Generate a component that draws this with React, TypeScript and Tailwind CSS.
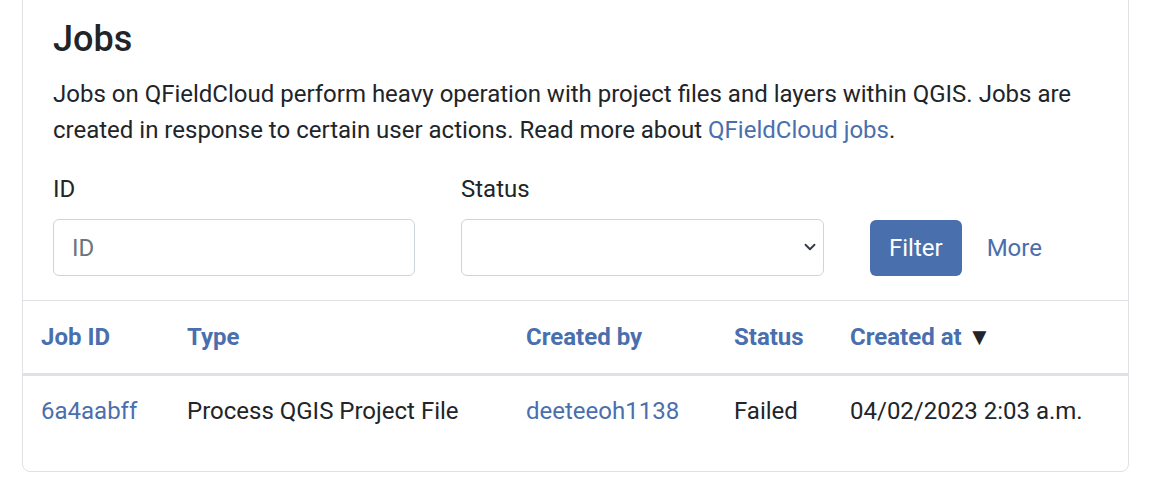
import { ChevronDown } from 'lucide-react';

interface Job {
    id: string;
    type: string;
    createdBy: string;
    status: string;
    createdAt: string;
}

const jobs: Job[] = [
    {
        id: '6a4aabff',
        type: 'Process QGIS Project File',
        createdBy: 'deeteeoh1138',
        status: 'Failed',
        createdAt: '04/02/2023 2:03 a.m.',
    },
];

const columns = [
    { label: 'Job ID', width: 'w-[146px]' },
    { label: 'Type', width: 'w-[339px]' },
    { label: 'Created by', width: 'w-[208px]' },
    { label: 'Status', width: 'w-[116px]' },
    { label: 'Created at', width: '', sorted: true },
];

export default function App() {
    return (
        <div className="min-h-[486px] bg-white font-['Roboto',sans-serif] text-[24px] leading-[36px] text-[#212529]">
            <div className="ml-[22px] -mt-[20px] w-[1107px] rounded-[8px] border border-[#dfe1e4] bg-white">
                <div className="px-[30px] pt-[37px] pb-[24px]">
                    <h2 className="mb-[15px] text-[36px] font-medium leading-[43px]">Jobs</h2>
                    <p className="mb-[23px]">
                        Jobs on QFieldCloud perform heavy operation with project files and layers within QGIS. Jobs are
                        created in response to certain user actions. Read more about{' '}
                        <a href="#" className="text-[#4a6fae]">QFieldCloud jobs</a>.
                    </p>
                    <form className="flex items-end" onSubmit={(e) => e.preventDefault()}>
                        <div className="flex w-[362px] flex-col">
                            <label className="mb-[12px]">ID</label>
                            <input
                                placeholder="ID"
                                className="h-[57px] rounded-[6px] border border-[#ced4da] px-[18px] text-[24px] outline-none placeholder:text-[#6c757d]"
                            />
                        </div>
                        <div className="ml-[46px] flex w-[363px] flex-col">
                            <label className="mb-[12px]">Status</label>
                            <div className="relative">
                                <select className="h-[57px] w-full appearance-none rounded-[6px] border border-[#ced4da] bg-white px-[18px] text-[24px] outline-none">
                                    <option value=""></option>
                                </select>
                                <ChevronDown className="pointer-events-none absolute right-[5px] top-[19px] h-[18px] w-[18px] text-[#343a40]" strokeWidth={2.5} />
                            </div>
                        </div>
                        <button className="ml-[46px] h-[56px] rounded-[6px] bg-[#4a6fad] px-[19px] text-white">
                            Filter
                        </button>
                        <a href="#" className="ml-[25px] flex h-[56px] items-center text-[#4a6fae]">More</a>
                    </form>
                </div>
                <table className="mb-[23px] w-full border-t border-[#dfe1e4] text-left">
                    <thead>
                        <tr className="border-b-[3px] border-[#dee2e6]">
                            {columns.map((col) => (
                                <th key={col.label} className={`${col.width} px-[18px] py-[18px] font-bold text-[#4a6fae]`}>
                                    {col.label}
                                    {col.sorted && <span className="ml-[6px] text-[24px] text-[#212529]">▼</span>}
                                </th>
                            ))}
                        </tr>
                    </thead>
                    <tbody>
                        {jobs.map((job) => (
                            <tr key={job.id}>
                                <td className="px-[18px] pt-[17px] pb-[19px]">
                                    <a href="#" className="text-[#4a6fae]">{job.id}</a>
                                </td>
                                <td className="px-[18px] pt-[17px] pb-[19px]">{job.type}</td>
                                <td className="px-[18px] pt-[17px] pb-[19px]">
                                    <a href="#" className="text-[#4a6fae]">{job.createdBy}</a>
                                </td>
                                <td className="px-[18px] pt-[17px] pb-[19px]">{job.status}</td>
                                <td className="px-[18px] pt-[17px] pb-[19px]">{job.createdAt}</td>
                            </tr>
                        ))}
                    </tbody>
                </table>
            </div>
        </div>
    );
}
